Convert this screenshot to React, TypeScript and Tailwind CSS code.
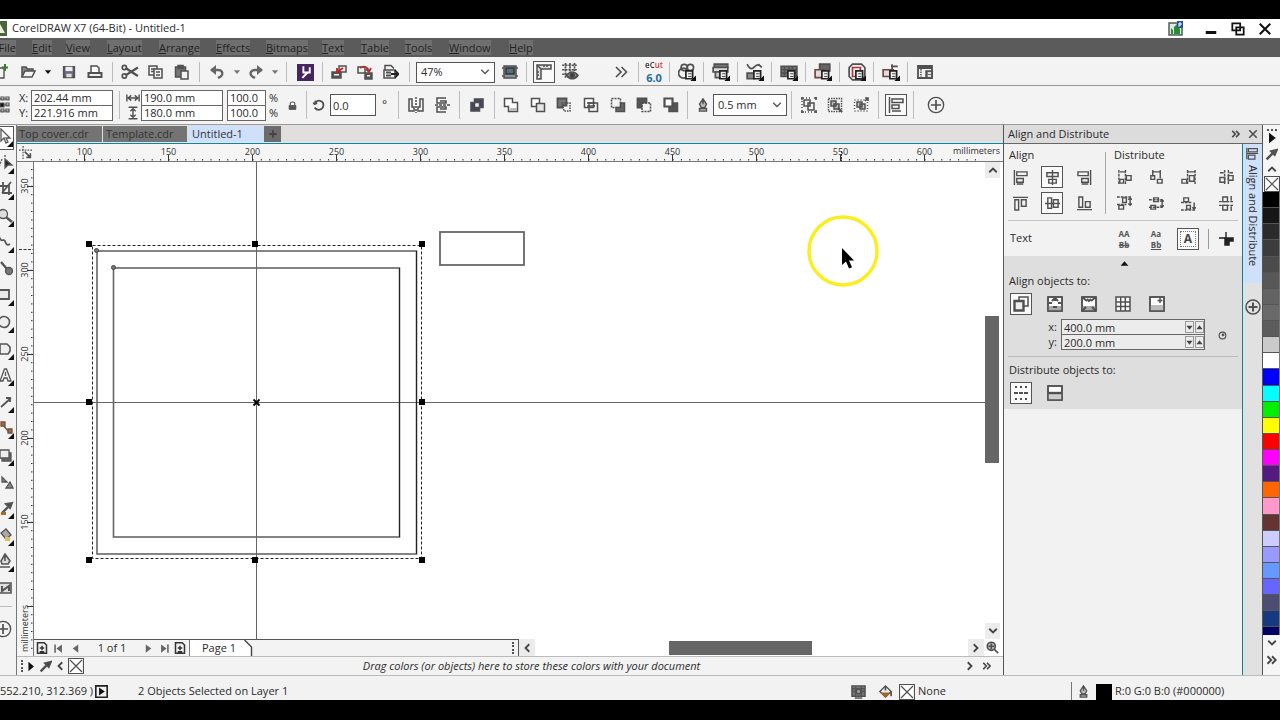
import React from "react";

type Kids = { children?: React.ReactNode };

function Ico({ children, size = 16 }: Kids & { size?: number }) {
  return (
    <svg width={size} height={size} viewBox="0 0 16 16" fill="none" stroke="#505050" strokeWidth="1.5" className="shrink-0" aria-hidden="true">
      {children}
    </svg>
  );
}

function Btn({ label, w = "w-[26px]", on = false, children }: Kids & { label: string; w?: string; on?: boolean }) {
  return (
    <button type="button" aria-label={label} aria-pressed={on || undefined} className={`flex h-6 shrink-0 items-center justify-center ${w}`}>
      {on ? <span className="flex size-[22px] items-center justify-center border border-[#555] bg-[#fafafa]">{children}</span> : children}
    </button>
  );
}

function Sep({ w = "w-2", h = "h-5" }: { w?: string; h?: string }) {
  return (
    <div className={`flex shrink-0 justify-center ${w}`}>
      <div className={`w-px bg-[#bdbdbd] ${h}`} />
    </div>
  );
}

function Caret({ dark = false }: { dark?: boolean }) {
  return (
    <Ico size={10}>
      <path d="M3 5h10l-5 6z" fill={dark ? "#111" : "#777"} stroke="none" />
    </Ico>
  );
}

function Chevron({ d, size = 12 }: { d: string; size?: number }) {
  return (
    <Ico size={size}>
      <path d={d} strokeWidth="2.4" stroke="#444" />
    </Ico>
  );
}

const RIGHT = "M5 3l5 5-5 5";
const LEFT = "M11 3l-5 5 5 5";
const UP = "M3 11l5-5 5 5";
const DOWN = "M3 5l5 5 5-5";
const DOUBLE = "M2 3l5 5-5 5M8 3l5 5-5 5";

const menus = [
  { t: "Edit", w: "w-[34px]" },
  { t: "View", w: "w-[41px]" },
  { t: "Layout", w: "w-[52px]" },
  { t: "Arrange", w: "w-[57px]" },
  { t: "Effects", w: "w-[50px]" },
  { t: "Bitmaps", w: "w-[56px]" },
  { t: "Text", w: "w-[39px]" },
  { t: "Table", w: "w-[44px]" },
  { t: "Tools", w: "w-[44px]" },
  { t: "Window", w: "w-[60px]" },
  { t: "Help", w: "w-[40px]" },
];

function TitleBar() {
  return (
    <header className="flex h-[19px] items-center bg-white">
      <svg width="7" height="15" viewBox="0 0 7 15" aria-hidden="true">
        <path d="M0 0h7v15H0z" fill="#49663f" />
        <path d="M0 3l5 9H0z" fill="#e8f0e0" />
      </svg>
      <h1 className="ml-[5px] flex-1 text-[11px]">CorelDRAW X7 (64-Bit) - Untitled-1</h1>
      <svg width="16" height="15" viewBox="0 0 16 15" className="mr-5" aria-hidden="true">
        <path d="M1 2h13v12H1z" fill="#dfe9df" stroke="#4d5f55" strokeWidth="1.5" />
        <path d="M3 13V7l2 2v4zM6 13V6l3-3 3 5v5z" fill="#2a8a35" />
        <path d="M9 0h6v7H9z" fill="#24518f" />
        <path d="M11 6V2h2v2h-2" stroke="#fff" fill="none" />
      </svg>
      <button type="button" aria-label="Minimize" className="w-[27px]">
        <Ico size={14}><path d="M2 12h12" strokeWidth="3.4" stroke="#111" /></Ico>
      </button>
      <button type="button" aria-label="Restore" className="w-[27px]">
        <Ico size={14}><path d="M1.500 1.500h9v8h-9zM6 6h8.500v8.500H6z" strokeWidth="2" stroke="#111" fill="#fff" /></Ico>
      </button>
      <button type="button" aria-label="Close" className="w-[22px]">
        <Ico size={14}><path d="M2 2l12 12M14 2L2 14" strokeWidth="2.4" stroke="#111" /></Ico>
      </button>
    </header>
  );
}

function MenuBar() {
  return (
    <nav className="flex h-[19px] items-center bg-[#5b5b5b] text-[11px] leading-[15px] text-[#222]">
      <button type="button" className="flex w-8 shrink-0 justify-end overflow-hidden pr-4">
        <span className="bg-[#6f6f6f]">File</span>
      </button>
      {menus.map((m) => (
        <button key={m.t} type="button" className={`shrink-0 text-left ${m.w}`}>
          <span className="bg-[#6f6f6f]"><u>{m.t[0]}</u>{m.t.slice(1)}</span>
        </button>
      ))}
    </nav>
  );
}

const flyouts: { label: string; art: React.ReactNode }[] = [
  { label: "Curve tools", art: <><circle cx="5" cy="9" r="4.500" /><circle cx="5.500" cy="4" r="2.800" /><circle cx="11" cy="4" r="2.800" /></> },
  { label: "Layer tools", art: <><path d="M2 1h12v3H2z" fill="#777" /><path d="M1 4h13v4H1z" fill="#ddd" /><path d="M3 8h6v5H3z" fill="#ccc" /></> },
  { label: "Path tools", art: <><path d="M1 1c3 6 5 4 7 2s4-2 6 1M11 1l3 3" /><path d="M1 14V9h6v5z" fill="#888" /></> },
  { label: "Grid tools", art: <path d="M1 3h14v9H1zM1 6h14M1 9h14M4 3v9M8 3v9M11 3v9" fill="#777" /> },
  { label: "Shape tools", art: <><path d="M5 1h9v6H5z" fill="#666" /><path d="M1 6h8v7H1z" fill="#ddd" stroke="#744" /></> },
  { label: "Contour tools", art: <><path d="M4 1h8l3 3v8l-3 3H4l-3-3V4z" /><path d="M4 4h7v8H4z" stroke="#b33" /></> },
  { label: "Connector tools", art: <><path d="M8 3h6M9 1v5" /><path d="M1 6h9v6H1z" fill="#ddd" stroke="#744" /></> },
];

function StandardBar() {
  return (
    <div role="toolbar" aria-label="Standard" className="flex h-[29px] items-center border-b border-[#9a9a9a] bg-[#f3f3f3] pt-[2px]">
      <button type="button" aria-label="New" className="flex h-6 w-[15px] shrink-0 justify-end overflow-hidden pr-[7px]">
        <svg width="8" height="24" viewBox="0 0 8 24" fill="none" stroke="#505050" strokeWidth="1.4">
          <path d="M0 8h4v10H0" />
          <path d="M5 4v7M2 7.500h6" stroke="#3b7a35" strokeWidth="2" />
        </svg>
      </button>
      <Btn label="Open">
        <Ico><path d="M2 13V3h4l1.500 2H13v2" fill="#888" /><path d="M2 13l3-6h10l-3 6z" fill="#f3f3f3" /></Ico>
      </Btn>
      <Btn label="Open recent" w="w-[14px]"><Caret dark /></Btn>
      <Btn label="Save" w="w-[27px]">
        <Ico size={14}><path d="M2 2h12v12H2z" fill="#6a6a80" strokeWidth="2" /><path d="M4 2h8v5H4z" fill="#eee" stroke="none" /><path d="M5 10h6v4H5z" fill="#ddd" stroke="none" /></Ico>
      </Btn>
      <Btn label="Print">
        <Ico><path d="M4 8V2h6l2 2v4" fill="#fff" /><path d="M1.500 9h13v4h-13z" fill="#eee" strokeWidth="2" /></Ico>
      </Btn>
      <Sep w="w-[9px]" />
      <Btn label="Cut">
        <Ico size={18}><path d="M4 4.500l11 7M4 11l11-7" strokeWidth="2" /><circle cx="3" cy="4" r="1.900" /><circle cx="3" cy="11.500" r="1.900" /></Ico>
      </Btn>
      <Btn label="Copy">
        <Ico><path d="M1 2h8v9H1zM3 5h4M3 7.500h4" /><path d="M6 5h8v9H6z" fill="#f3f3f3" /><path d="M8 8h4M8 11h4" /></Ico>
      </Btn>
      <Btn label="Paste">
        <Ico><path d="M1.500 3h10v10h-10z" fill="#777" /><path d="M4 1.500h5v3H4z" fill="#555" /><path d="M7 7h7v8H7z" fill="#f3f3f3" /></Ico>
      </Btn>
      <Sep w="w-[9px]" />
      <Btn label="Undo">
        <Ico><path d="M2 6h7c4 0 5 3 4 5s-2 2-4 3" strokeWidth="2.400" stroke="#666" /><path d="M7 1v10L1 6z" fill="#666" stroke="none" /></Ico>
      </Btn>
      <Btn label="Undo list" w="w-[13px]"><Caret /></Btn>
      <Btn label="Redo">
        <Ico><path d="M14 6H7c-4 0-5 3-4 5s2 2 4 3" strokeWidth="2.400" stroke="#666" /><path d="M9 1v10l6-5z" fill="#666" stroke="none" /></Ico>
      </Btn>
      <Btn label="Redo list" w="w-3"><Caret /></Btn>
      <Sep w="w-[11px]" />
      <Btn label="Content exchange">
        <Ico size={17}><path d="M0 0h16v16H0z" fill="#44265f" stroke="none" /><path d="M6 2v6h6V3M5 13l5-5" stroke="#fff" strokeWidth="1.800" /></Ico>
      </Btn>
      <Sep />
      <Btn label="Import">
        <Ico><path d="M1 8h9v6H1z" fill="#555" /><path d="M3 10h5v1.500H3z" fill="#eee" stroke="none" /><path d="M8 2h7v6H8z" fill="#eee" /><path d="M12 4L6 8M6 4v4h4" stroke="#b22" strokeWidth="1.800" /></Ico>
      </Btn>
      <Btn label="Export">
        <Ico><path d="M1 3h7v6H1z" fill="#eee" /><path d="M8 9h7v6H8z" fill="#555" /><path d="M10 11h3v1.500h-3z" fill="#eee" stroke="none" /><path d="M3 4c4-3 8-1 9 4M9 5l3 3 2-4" stroke="#a33" strokeWidth="1.800" /></Ico>
      </Btn>
      <Btn label="Publish">
        <Ico><path d="M2 6V1.500h6l3 3M1 6h11v8H1z" /><path d="M3 8.500h5M3 11.500h5" strokeWidth="2" /><path d="M8 10h7M12 6.500l3.500 3.500-3.500 3.500" strokeWidth="1.800" stroke="#222" /></Ico>
      </Btn>
      <Sep w="w-[11px]" />
      <select aria-label="Zoom level" defaultValue="47%" className="ml-px h-[21px] w-[79px] shrink-0 appearance-none border border-[#555] bg-white pl-1 text-[11px]">
        <option>47%</option>
      </select>
      <svg width="12" height="12" viewBox="0 0 16 16" className="pointer-events-none relative -ml-4 shrink-0" fill="none" stroke="#555" strokeWidth="1.800" aria-hidden="true">
        <path d={DOWN} />
      </svg>
      <Btn label="Full-screen preview" w="ml-[7px] w-[23px]">
        <Ico><path d="M2 2h12v12H2z" fill="#899" /><path d="M4 4h8v6H4z" fill="#57707c" stroke="#333" /><path d="M0 4h2M0 12h2M14 4h2M14 12h2" /></Ico>
      </Btn>
      <Sep w="w-[11px]" />
      <Btn label="Show rulers" w="w-6" on>
        <Ico><path d="M1 1h14v4H5v10H1z" fill="#ddd" /><path d="M8 1v2M11 1v2M1 8h2M1 11h2M5 5L1 1" /></Ico>
      </Btn>
      <Btn label="Show grid" w="w-7">
        <Ico size={18}><path d="M1 2h13M1 6h13M1 10h6M4 0v13M8 0v9M12 0v7" strokeDasharray="2 0.800" /><path d="M5 11c3-4 7-4 10 0-3 4-7 4-10 0z" fill="#999" /><circle cx="10" cy="11" r="1.800" fill="#333" /></Ico>
      </Btn>
      <Btn label="More" w="ml-6 w-[26px]">
        <Ico><path d="M3 3l5 5-5 5M8.500 3l5 5-5 5" strokeWidth="1.600" /></Ico>
      </Btn>
      <Sep w="w-[9px]" />
      <button type="button" className="w-[22px] shrink-0">
        <span className="block bg-linear-to-r from-[#333] from-50% to-[#c33] to-50% bg-clip-text text-[8px] font-semibold leading-[11px] text-transparent">eCut</span>
        <span className="block text-[11px] font-bold leading-[15px] text-[#1f6ca0]">6.0</span>
      </button>
      {flyouts.map((f) => (
        <React.Fragment key={f.label}>
          <Sep w="w-[9px]" />
          <Btn label={f.label} w="w-[25px]">
            <Ico size={18}>
              {f.art}
              <path d="M7 7h6v7H7z" fill="#eee" stroke="#222" />
              <path d="M9 9.500h3M9 12h3" strokeWidth="1" />
              <path d="M16 11v5h-5z" fill="#111" stroke="none" />
            </Ico>
          </Btn>
        </React.Fragment>
      ))}
      <Sep w="w-[9px]" />
      <Btn label="Docker window" w="w-[25px]">
        <Ico><path d="M1 2h14v12H1zM1 4h14" strokeWidth="1.800" /><path d="M9 7h6v7H9z" fill="#777" /><path d="M11 9h3M11 12h3" stroke="#fff" /><path d="M4 5v9" strokeDasharray="1.500 1" /></Ico>
      </Btn>
    </div>
  );
}

function Pair({ names, values, w }: { names: [string, string]; values: [string, string]; w: string }) {
  return (
    <div className={`flex h-[31px] shrink-0 flex-col border border-[#666] bg-white ${w}`}>
      <input aria-label={names[0]} defaultValue={values[0]} className="min-h-0 w-full flex-1 border-b border-[#666] pl-[2px] text-[11px] leading-[13px] outline-none" />
      <input aria-label={names[1]} defaultValue={values[1]} className="min-h-0 w-full flex-1 pl-[2px] text-[11px] leading-[13px] outline-none" />
    </div>
  );
}

const shaping: { label: string; art: React.ReactNode }[] = [
  { label: "Weld", art: <><path d="M1.500 1.500h8v4h5v9h-9v-5h-4z" fill="#fff" /><path d="M7 11h7v3H7z" fill="#bbb" stroke="none" /></> },
  { label: "Trim", art: <><path d="M1.500 1.500h8v8h-8z" fill="#fff" /><path d="M6.500 6.500h8v8h-8z" fill="#e6e6e6" /></> },
  { label: "Intersect", art: <><path d="M1.500 1.500h9v7h-4v2h-5z" fill="#777" strokeWidth="1.800" /><path d="M6 6h8v8H8z" strokeDasharray="1.500 1" /></> },
  { label: "Simplify", art: <><path d="M1.500 1.500h9v9h-9z" fill="#fff" /><path d="M6 6h8.500v8.500H6z" /><path d="M4 6h8M4 9h8" /></> },
  { label: "Front minus back", art: <><path d="M1.500 1.500h9v9h-9z" strokeDasharray="2 1" /><path d="M10.500 6h4v8.500H6v-4h4.500z" fill="#666" /></> },
  { label: "Back minus front", art: <><path d="M1.500 1.500h9v4h-5v5h-4z" fill="#555" strokeWidth="1.800" /><path d="M6 6h8.500v8.500H6z" strokeDasharray="2 1" /></> },
  { label: "Boundary", art: <><path d="M1.500 1.500h8v8h-8z" fill="#fff" strokeWidth="2.200" /><path d="M10.500 6h4v8.500H6v-4h4.500z" fill="#555" /></> },
];

function PropertyBar() {
  return (
    <div role="toolbar" aria-label="Property bar" className="flex h-[39px] items-center border-b border-[#9a9a9a] bg-[#f3f3f3]">
      <svg width="11" height="18" viewBox="0 0 11 18" fill="none" stroke="#555" strokeWidth="1.200" className="shrink-0" aria-hidden="true">
        <path d="M0 3h9M0 9h9M0 15h9" />
        <path d="M1 1h3v3H1zM6 1h3v3H6zM6 7h3v3H6zM1 13h3v3H1zM6 13h3v3H6z" />
        <path d="M0 7h4v4H0z" fill="#111" />
      </svg>
      <div className="ml-2 w-3 shrink-0 text-[11px] leading-[15px]">
        <div>X:</div>
        <div>Y:</div>
      </div>
      <Pair names={["X position", "Y position"]} values={["202.44 mm", "221.916 mm"]} w="w-[82px]" />
      <Sep w="w-[12px]" h="h-7" />
      <div className="flex w-4 shrink-0 flex-col items-center gap-px">
        <Ico size={14}><path d="M1 4v8M15 4v8M2 8h12M6 5L2.500 8 6 11M10 5l3.500 3-3.500 3" strokeWidth="1.600" /></Ico>
        <Ico size={14}><path d="M3 1.500h10M3 14.500h10M8 3v10M5 6l3-3 3 3M5 10l3 3 3-3" strokeWidth="1.600" /></Ico>
      </div>
      <Pair names={["Width", "Height"]} values={["190.0 mm", "180.0 mm"]} w="w-[82px]" />
      <div className="w-1 shrink-0" />
      <Pair names={["Horizontal scale", "Vertical scale"]} values={["100.0", "100.0"]} w="w-[39px]" />
      <div className="ml-[3px] w-[15px] shrink-0 text-[11px] leading-[15px]">
        <div>%</div>
        <div>%</div>
      </div>
      <Btn label="Lock ratio" w="w-4">
        <Ico size={9}><path d="M4 8V4c0-3 8-3 8 0v4" strokeWidth="2" /><path d="M2 8h12v7H2z" fill="#555" /></Ico>
      </Btn>
      <Sep w="w-[12px]" h="h-7" />
      <label htmlFor="angle" aria-label="Angle of rotation" className="w-[18px] shrink-0">
        <Ico size={14}><path d="M4 5c4-4 10-1 9 4-1 5-7 6-10 2M1 6h5M4 3L3 8" strokeWidth="2" /></Ico>
      </label>
      <input id="angle" defaultValue="0.0" className="h-[22px] w-[46px] shrink-0 border border-[#555] bg-white pl-[2px] text-[11px] outline-none" />
      <span className="ml-[6px] w-3 shrink-0 text-[12px]">°</span>
      <Sep w="w-[9px]" h="h-7" />
      <Btn label="Mirror horizontally">
        <Ico><path d="M1 2h3v8h2v4H1zM15 2h-3v8h-2v4h5z" /><path d="M8 0v16" strokeDasharray="2 1" /></Ico>
      </Btn>
      <Btn label="Mirror vertically">
        <Ico><path d="M12 1H3v5h9V4H6M12 15H3v-5h9v2H6" /><path d="M1 8h15" strokeDasharray="3 1" /></Ico>
      </Btn>
      <Sep w="w-[9px]" h="h-7" />
      <Btn label="Combine">
        <Ico size={14}><path d="M5 1h10v10H5z" fill="#46465a" /><path d="M1 5h10v10H1z" fill="#46465a" /><path d="M6 6h4v4H6z" fill="#eee" stroke="none" /></Ico>
      </Btn>
      <Sep w="w-[9px]" h="h-7" />
      <div className="flex w-[184px] shrink-0 justify-between">
        {shaping.map((s) => (
          <Btn key={s.label} label={s.label} w="w-6"><Ico>{s.art}</Ico></Btn>
        ))}
      </div>
      <Sep w="w-[9px]" h="h-7" />
      <label htmlFor="outline" aria-label="Outline width" className="ml-1 w-[17px] shrink-0">
        <Ico size={14}><path d="M8 1l4 6-2 4H6L4 7zM8 2v5M4 12h8v3H4z" fill="#bbb" strokeWidth="1.600" /></Ico>
      </label>
      <select id="outline" defaultValue="0.5 mm" className="h-[22px] w-[74px] shrink-0 appearance-none border border-[#555] bg-white pl-1 text-[11px]">
        <option>0.5 mm</option>
      </select>
      <svg width="12" height="12" viewBox="0 0 16 16" className="pointer-events-none relative -ml-4 shrink-0" fill="none" stroke="#555" strokeWidth="1.800" aria-hidden="true">
        <path d={DOWN} />
      </svg>
      <Sep w="ml-1 w-[9px]" h="h-7" />
      <Btn label="Group objects">
        <Ico><path d="M3 3h6v6H3zM7 6h6v7H7z" /><path d="M0 1h3M1 0v3M13 1h3M15 0v3M0 15h3M1 13v3M13 15h3M15 13v3" /><path d="M1 4v8M4 15h8M5 1h6" strokeDasharray="1 2" /></Ico>
      </Btn>
      <Btn label="Ungroup objects">
        <Ico><path d="M1.500 1.500h13v13h-13z" strokeDasharray="1.500 1" /><path d="M4 4h5v5H4zM7 7h5v5H7z" fill="#bbb" /><path d="M11 11l4 4" strokeWidth="2" /></Ico>
      </Btn>
      <Btn label="Ungroup all">
        <Ico><path d="M1.500 3h13v11h-13z" strokeDasharray="1 2" /><path d="M4 5h5v5H4zM7 7h5v5H7z" fill="#ccc" /><path d="M12 4l3-3M12 1h3v3" /></Ico>
      </Btn>
      <Sep w="w-[9px]" h="h-7" />
      <Btn label="Align and distribute" on>
        <Ico><path d="M1.500 0v16M4 2h11v3.500H4zM4 8h7v3.500H4z" /><path d="M4 14h9" /></Ico>
      </Btn>
      <Sep w="w-[9px]" h="h-7" />
      <Btn label="Quick customize" w="ml-[5px] w-[26px]">
        <Ico size={18}><circle cx="8" cy="8" r="6.800" strokeWidth="1.200" /><path d="M8 3.500v9M3.500 8h9" /></Ico>
      </Btn>
    </div>
  );
}

const tools: { label: string; art: React.ReactNode; fly?: boolean }[] = [
  { label: "Pick", art: <path d="M5 1v12l3-3 2 5 2-1-2-4h4z" fill="#fff" />, fly: true },
  { label: "Shape", art: <><path d="M8 0v3M5 4l-3 8" strokeDasharray="2 1" /><path d="M8 4v9l3-3h4z" fill="#222" /></>, fly: true },
  { label: "Crop", art: <path d="M6 1v11h9M3 5h9v9M14 1L5 12" strokeWidth="1.800" />, fly: true },
  { label: "Zoom", art: <><circle cx="6" cy="6" r="4.500" fill="#ddd" /><path d="M9 9l6 5" strokeWidth="2.400" /></>, fly: true },
  { label: "Freehand", art: <path d="M2 2c2 8 5 2 6 5s2 5 5 3" strokeWidth="1.800" />, fly: true },
  { label: "Artistic media", art: <><path d="M4 1l6 7" strokeWidth="2.400" /><circle cx="12" cy="10" r="3.500" fill="#777" /></> },
  { label: "Rectangle", art: <path d="M1 3h11v9H1z" fill="#e8e8e8" strokeWidth="1.800" />, fly: true },
  { label: "Ellipse", art: <circle cx="7" cy="8" r="5.500" fill="#eee" strokeWidth="1.600" />, fly: true },
  { label: "Polygon", art: <path d="M3 3h7l3 3v4l-2 3H3z" fill="#eee" strokeWidth="1.600" />, fly: true },
  { label: "Text", art: <path d="M3 14L7.500 2h2L14 14h-3l-1-3H7l-1 3zM8.500 5v4" />, fly: true },
  { label: "Dimension", art: <path d="M4 13l10-9M9 4h4v4" strokeWidth="1.800" />, fly: true },
  { label: "Connector", art: <><path d="M5 4l7 8" /><path d="M4 2h4v4H4zM11 9h4v4h-4z" fill="#a86a4a" stroke="#74503c" /></>, fly: true },
  { label: "Drop shadow", art: <><path d="M5 6h9v8H5z" fill="#666" /><path d="M3 3h9v8H3z" fill="#eee" /></>, fly: true },
  { label: "Transparency", art: <path d="M5 8V3l5 5zM9 14l4-6 3 6z" fill="#888" /> },
  { label: "Eyedropper", art: <><path d="M5 13l6-6" strokeWidth="2.400" /><path d="M9 4l4 4 2-5z" fill="#444" strokeWidth="2" /><path d="M4 12h5v3H4z" fill="#a86a30" stroke="none" /></>, fly: true },
  { label: "Interactive fill", art: <><path d="M4 6l5-4 5 6-5 4z" fill="#aaa" /><path d="M8 10h5v4H8z" fill="#e0c060" stroke="none" /></>, fly: true },
  { label: "Outline pen", art: <path d="M8 1l5 7-2 3H5L4 8zM8 2v6M3 14h10" fill="#ddd" strokeWidth="1.600" />, fly: true },
  { label: "Smart fill", art: <><path d="M2 3h12v10H2z" fill="#ddd" strokeWidth="1.600" /><path d="M5 6v5l7-5v5" strokeWidth="2" /></> },
];

function Toolbox() {
  return (
    <aside className="flex w-[17px] shrink-0 flex-col border-r border-[#777] bg-[#f3f3f3] pt-px text-[#333]">
      <div className="flex h-[476px] flex-col justify-between">
        {tools.map((t, i) => (
          <button key={t.label} type="button" aria-label={t.label} className={`flex h-6 w-[14px] items-center justify-end overflow-hidden ${i === 0 ? "border border-l-0 border-[#555] bg-white" : ""}`}>
            <svg width="17" height="20" viewBox="0 0 17 20" fill="none" stroke="#555" strokeWidth="1.300" className="shrink-0">
              {t.art}
              {t.fly && <path d="M17 13v6h-6z" fill="#111" stroke="none" />}
            </svg>
          </button>
        ))}
      </div>
      <div className="mt-1 h-px w-3 bg-[#bbb]" />
      <button type="button" aria-label="Customize toolbox" className="mt-[10px] flex h-6 w-3 items-center justify-end overflow-hidden">
        <Ico size={18}><circle cx="8" cy="8" r="6.800" strokeWidth="1.200" /><path d="M8 3.500v9M3.500 8h9" /></Ico>
      </button>
    </aside>
  );
}

const range = (n: number) => Array.from({ length: n }, (_, i) => i);

function TopRuler() {
  return (
    <div className="flex h-[18px] shrink-0 border-b border-[#777] bg-[#f5f5f5]">
      <div className="flex w-[17px] shrink-0 items-center justify-center">
        <Ico size={13}><path d="M5 0v16M0 5h16" strokeDasharray="2 1.500" /><path d="M7 7l7 7M14 9v5H9" strokeWidth="2" /></Ico>
      </div>
      <div className="min-w-0 flex-1">
        <svg width="100%" height="17" className="block" fill="#333" fontSize="9">
          {range(112).map((i) => (
            <rect key={i} x={8.500 + i * 8.400} y="15" width="1" height="1.500" />
          ))}
          {range(11).map((i) => (
            <g key={i}>
              <rect x={50 + i * 84} y="11" width="1" height="6" />
              <text x={50.500 + i * 84} y="11" textAnchor="middle">{100 + i * 50}</text>
            </g>
          ))}
          <path d="M807.500 7v10" stroke="#333" strokeDasharray="2 1" />
          <text x="919" y="10">millimeters</text>
        </svg>
      </div>
    </div>
  );
}

function LeftRuler() {
  return (
    <div className="w-[17px] shrink-0 border-r border-[#777] bg-[#f5f5f5]">
      <svg width="16" height="100%" className="block" fill="#333" fontSize="9">
        {range(58).map((i) => (
          <rect key={i} x="14" y={7 + i * 8.400} width="1.500" height="1" />
        ))}
        {range(6).map((i) => (
          <g key={i}>
            <rect x="10" y={24 + i * 84} width="6" height="1" />
            {i < 5 && (
              <text transform={`translate(11 ${24 + i * 84}) rotate(-90)`} textAnchor="middle">{350 - i * 50}</text>
            )}
          </g>
        ))}
        <path d="M2 87.500h14" stroke="#333" strokeDasharray="3 1.500" />
        <text transform="translate(11 490) rotate(-90)">millimeters</text>
      </svg>
    </div>
  );
}

const handles = [
  [52, 79], [218, 79], [385, 79],
  [52, 237], [385, 237],
  [52, 395], [218, 395], [385, 395],
];

function Canvas() {
  return (
    <div className="min-w-0 flex-1 bg-white">
      <svg width="100%" height="100%" className="block" fill="none" aria-label="Drawing page">
        <path d="M222.500 0v800M0 240.500h2000" stroke="#666" />
        <rect x="58.500" y="83.500" width="329" height="313" stroke="#222" strokeDasharray="3 2" />
        <rect x="63" y="89" width="319.500" height="303" stroke="#666" strokeWidth="1.600" />
        <rect x="79.500" y="106" width="286" height="269" stroke="#666" strokeWidth="1.600" />
        <path d="M365.500 106v269M382.500 89v303" stroke="#222" />
        <rect x="406" y="70" width="84" height="33" stroke="#666" strokeWidth="1.800" />
        <circle cx="62.500" cy="88.500" r="2" fill="#777" stroke="#444" />
        <circle cx="79.500" cy="105.500" r="2" fill="#777" stroke="#444" />
        {handles.map(([x, y]) => (
          <rect key={`${x}-${y}`} x={x} y={y} width="6" height="6" fill="#000" />
        ))}
        <path d="M219.500 237.500l6 6M225.500 237.500l-6 6" stroke="#000" strokeWidth="1.800" />
        <circle cx="809" cy="89" r="34" stroke="#fbee1c" strokeWidth="3.400" />
        <path d="M808 86v17l4-3.500 3 7 3-1.300-3-6.700h5z" fill="#000" />
      </svg>
    </div>
  );
}

function DocTabs() {
  return (
    <div className="flex h-[17px] shrink-0 items-stretch gap-px bg-[#e1dfde] pt-px text-[11px] leading-4">
      <button type="button" className="w-[85px] bg-[#747474] pl-[2px] text-left text-[#333]">Top cover.cdr</button>
      <button type="button" className="w-[84px] bg-[#747474] pl-[3px] text-left text-[#333]">Template.cdr</button>
      <button type="button" className="w-[75px] bg-[#cfe0fb] pl-1 text-left text-[#333]">Untitled-1</button>
      <button type="button" aria-label="New document" className="flex w-[17px] items-center justify-center bg-[#6c6c6c]">
        <Ico size={10}><path d="M8 2v12M2 8h12" strokeWidth="3" stroke="#444" /></Ico>
      </button>
    </div>
  );
}

function PageNav() {
  return (
    <div className="flex h-[17px] shrink-0 items-center bg-white">
      <div className="flex h-full w-[485px] shrink-0 items-center border-r border-t border-[#555] bg-[#f3f3f3] text-[11px]">
        <Btn label="Add page before" w="w-4"><Ico size={12}><path d="M2 1h9l3 3v11H2zM5 8h6M8 5v6M5 13h6" strokeWidth="2" stroke="#333" /></Ico></Btn>
        <Btn label="First page" w="w-4"><Ico size={11}><path d="M3 2v12" strokeWidth="2" /><path d="M13 2v12L5 8z" fill="#666" stroke="none" /></Ico></Btn>
        <Btn label="Previous page" w="w-[18px]"><Ico size={11}><path d="M12 2v12L4 8z" fill="#666" stroke="none" /></Ico></Btn>
        <span className="w-[56px] text-center">1 of 1</span>
        <Btn label="Next page" w="w-4"><Ico size={11}><path d="M4 2v12l8-6z" fill="#666" stroke="none" /></Ico></Btn>
        <Btn label="Last page" w="w-4"><Ico size={11}><path d="M13 2v12" strokeWidth="2" /><path d="M3 2v12l8-6z" fill="#666" stroke="none" /></Ico></Btn>
        <Btn label="Add page after" w="w-4"><Ico size={12}><path d="M2 1h9l3 3v11H2zM5 8h6M8 5v6M5 13h6" strokeWidth="2" stroke="#333" /></Ico></Btn>
        <button type="button" className="ml-px flex h-full items-center border-l border-[#777] bg-white pl-3">
          Page 1
          <svg width="16" height="16" viewBox="0 0 16 16" className="ml-1" fill="none" aria-hidden="true">
            <path d="M5 0h11v16h-4V7z" fill="#f3f3f3" />
            <path d="M4.500 0l7 7v9" stroke="#444" strokeWidth="1.400" />
          </svg>
        </button>
        <span className="ml-auto mr-1 h-3 border-l-2 border-dotted border-[#555]" />
      </div>
      <button type="button" aria-label="Scroll left" className="flex h-full w-4 items-center justify-center bg-[#ececec]"><Chevron d={LEFT} /></button>
      <div className="flex h-full min-w-0 flex-1 items-center">
        <div className="w-[31%] shrink-0" />
        <div className="h-[14px] w-[33%] bg-[#666]" />
      </div>
      <button type="button" aria-label="Scroll right" className="flex h-full w-4 items-center justify-center bg-[#ececec]"><Chevron d={RIGHT} /></button>
      <button type="button" aria-label="Navigator" className="mr-[3px] flex h-full w-4 items-center justify-center">
        <Ico size={13}><circle cx="6.500" cy="6.500" r="5" fill="#bbb" strokeWidth="2" /><path d="M6.500 3v7M3 6.500h7M10 10l5 5" strokeWidth="2" /></Ico>
      </button>
    </div>
  );
}

function DocPalette() {
  return (
    <div className="flex h-[19px] shrink-0 items-center border-t border-[#bbb] bg-[#f3f3f3]">
      <span className="ml-1 h-3 border-l-2 border-dotted border-[#555]" />
      <Btn label="Palette menu" w="w-[15px]"><Ico size={11}><path d="M5 1v14l8-7z" fill="#111" stroke="none" /></Ico></Btn>
      <Btn label="Pick color" w="w-[15px]"><Ico size={13}><path d="M2 14l7-7" strokeWidth="3" /><path d="M7 4l5 5 3-7z" fill="#444" strokeWidth="2" /></Ico></Btn>
      <Btn label="Previous colors" w="w-[13px]"><Chevron d={LEFT} size={12} /></Btn>
      <Btn label="No color" w="w-5"><Ico><path d="M.5.500h15v15H.5zM2 2l12 12M14 2L2 14" strokeWidth="1.200" fill="#fff" /></Ico></Btn>
      <p className="flex-1 pl-[15px] text-center text-[11px] italic">Drag colors (or objects) here to store these colors with your document</p>
      <Btn label="Next colors" w="w-4"><Chevron d={RIGHT} /></Btn>
      <Btn label="Expand palette" w="mr-2 w-[17px]"><Chevron d={DOUBLE} size={10} /></Btn>
    </div>
  );
}

function VScroll() {
  return (
    <div className="flex w-[18px] shrink-0 flex-col bg-white pr-[3px]">
      <button type="button" aria-label="Scroll up" className="flex h-4 items-center justify-center bg-[#ececec]"><Chevron d={UP} /></button>
      <div className="flex min-h-0 flex-1 flex-col">
        <div className="h-[31%] shrink-0" />
        <div className="h-[33%] w-[14px] bg-[#666]" />
      </div>
      <button type="button" aria-label="Scroll down" className="flex h-4 items-center justify-center bg-[#ececec]"><Chevron d={DOWN} /></button>
    </div>
  );
}

const alignRows: { label: string; art: React.ReactNode; on?: boolean }[][] = [
  [
    { label: "Align left", art: <path d="M1.500 0v16M4 2h11v4H4zM4 9h7v4H4zM4 15h7" /> },
    { label: "Align center horizontally", on: true, art: <path d="M8 0v16M2 3h12v4H2zM4 10h8v4H4z" /> },
    { label: "Align right", art: <path d="M14.500 0v16M1 2h11v4H1zM5 9h7v4H5zM5 15h7" /> },
  ],
  [
    { label: "Align top", art: <path d="M0 1.500h16M2 4h4v11H2zM9 4h5v7H9z" /> },
    { label: "Align center vertically", on: true, art: <path d="M0 8h16M3 2h4v11H3zM9 4h5v8H9z" /> },
    { label: "Align bottom", art: <path d="M0 14.500h16M2 1h4v11H2zM9 6h5v6H9z" /> },
  ],
];

const distRows: { label: string; art: React.ReactNode }[][] = [
  [
    { label: "Distribute left", art: <><path d="M2 0v16M9 0v16" strokeDasharray="3 1" /><path d="M3 10h4v4H3zM10 6h5v5h-5zM3 2h6" /></> },
    { label: "Distribute center", art: <><path d="M4 0v7M12 0v9M4 2h8" /><path d="M2 6h4v4H2zM9 10h5v4H9z" /></> },
    { label: "Distribute right", art: <><path d="M7 0v16M15 0v16" strokeDasharray="3 1" /><path d="M1 10h5v4H1zM9 6h5v6H9zM7 2h8" /></> },
    { label: "Distribute spacing horizontally", art: <><path d="M6 0v16M10 0v16" strokeDasharray="3 1" /><path d="M1 8h5v5H1zM10 6h5v5h-5zM1 3h4M11 3h4" /></> },
  ],
  [
    { label: "Distribute top", art: <><path d="M0 1h16M0 9h10" strokeDasharray="3 1" /><path d="M6 2h4v5H6zM2 10h5v4H2zM14 2v8M12 4l2-2 2 2M12 8l2 2 2-2" /></> },
    { label: "Distribute middle", art: <><path d="M0 4h14M0 12h14" strokeDasharray="3 1" /><path d="M5 2h5v4H5zM2 10h5v4H2zM14 4v8M12 6l2-2 2 2M12 10l2 2 2-2" /></> },
    { label: "Distribute bottom", art: <><path d="M0 7h12M0 15h16" strokeDasharray="3 1" /><path d="M3 2h5v4H3zM6 10h4v4H6zM14 7v7M12 12l2 2 2-2" /></> },
    { label: "Distribute spacing vertically", art: <><path d="M0 6h16M0 10h16" strokeDasharray="3 1" /><path d="M4 1h5v5H4zM4 10h5v5H4zM13 0v5M13 11v5" /></> },
  ],
];

const targets: { label: string; art: React.ReactNode; on?: boolean }[] = [
  { label: "Active objects", on: true, art: <><path d="M6 1h9v9H6z" /><path d="M1.500 5h9v9.500h-9z" fill="#eee" strokeWidth="2.400" /></> },
  { label: "Page edge", art: <><path d="M1 1h14v14H1z" fill="#fff" /><path d="M1 10h14v5H1z" fill="#aaa" stroke="none" /><path d="M8 2v3M2 7h3M11 7h3M6 11h4M5 5l3-3 3 3" strokeWidth="2" /><path d="M1 1h14v14H1z" /></> },
  { label: "Page center", art: <><path d="M1 1h14v14H1z" fill="#fff" /><path d="M1 10h14v5H1z" fill="#aaa" stroke="none" /><path d="M1 1l5 4M15 1l-5 4M1 15l4-4M15 15l-4-4M6 3l2 2 2-2" strokeWidth="2" /><path d="M1 1h14v14H1z" /></> },
  { label: "Grid", art: <path d="M1 1h14v14H1zM1 6h14M1 10.500h14M5.700 1v14M10.300 1v14" fill="#fff" /> },
  { label: "Specified point", art: <><path d="M1 1h14v14H1z" fill="#fff" /><path d="M1 9h14v6H1z" fill="#bbb" stroke="none" /><path d="M11 2v5M8.500 4.500h5" /><path d="M1 1h14v14H1z" /></> },
];

function CoordField({ id, label, value }: { id: string; label: string; value: string }) {
  return (
    <div className="flex h-[15px] items-stretch text-[11px] leading-[14px]">
      <label htmlFor={id} className="w-[17px] pr-1 text-right">{label}</label>
      <div className="-mt-px flex min-w-0 flex-1 items-center border border-[#666] bg-[#ececec]">
        <input id={id} defaultValue={value} className="h-full min-w-0 flex-1 pl-[2px] outline-none" />
        <button type="button" aria-label={`Decrease ${label}`} className="flex h-3 w-[9px] items-center justify-center border border-[#999]">
          <Ico size={7}><path d="M1 4h14l-7 9z" fill="#444" stroke="none" /></Ico>
        </button>
        <button type="button" aria-label={`Increase ${label}`} className="ml-px flex h-3 w-[9px] items-center justify-center border border-[#999]">
          <Ico size={7}><path d="M1 12h14L8 3z" fill="#444" stroke="none" /></Ico>
        </button>
      </div>
    </div>
  );
}

function Docker() {
  return (
    <aside className="flex w-[259px] shrink-0 flex-col border-l border-[#555] bg-[#f2f2f2]">
      <div className="flex h-[19px] shrink-0 items-center border-b border-[#666] bg-[#dcdcdc]">
        <h2 className="flex-1 pl-1 text-[11px] font-medium">Align and Distribute</h2>
        <Btn label="Collapse docker" w="w-4"><Chevron d={DOUBLE} size={10} /></Btn>
        <Btn label="Close docker" w="w-[18px]"><Ico size={10}><path d="M2 2l12 12M14 2L2 14" strokeWidth="2.600" /></Ico></Btn>
      </div>
      <div className="flex min-h-0 flex-1">
        <div className="min-w-0 flex-1 text-[11px]">
          <div className="flex h-[76px]">
            <div className="w-[101px] shrink-0">
              <h3 className="h-5 pl-[5px] font-medium leading-[22px]">Align</h3>
              {alignRows.map((row, i) => (
                <div key={i} className="flex h-[26px] items-center">
                  {row.map((b) => (
                    <Btn key={b.label} label={b.label} w="w-8" on={b.on}><Ico size={15}>{b.art}</Ico></Btn>
                  ))}
                </div>
              ))}
            </div>
            <div className="mt-2 h-[62px] w-px bg-[#aaa]" />
            <div className="min-w-0 flex-1">
              <h3 className="h-5 pl-2 font-medium leading-[22px]">Distribute</h3>
              {distRows.map((row, i) => (
                <div key={i} className="flex h-[26px] items-center pl-[2px]">
                  {row.map((b, j) => (
                    <Btn key={b.label} label={b.label} w={j === 3 ? "ml-auto w-8" : "w-8"}><Ico size={15}>{b.art}</Ico></Btn>
                  ))}
                </div>
              ))}
            </div>
          </div>
          <div className="mx-1 border-t border-[#c4c4c4]" />
          <div className="flex h-[35px] items-center">
            <span className="w-[104px] pl-[6px]">Text</span>
            <Btn label="First line baseline" w="w-8">
              <span className="text-[8px] font-bold leading-[11px] text-[#555]"><span className="block">AA</span><span className="block line-through">Bb</span></span>
            </Btn>
            <Btn label="Last line baseline" w="w-8">
              <span className="text-[8px] font-bold leading-[11px] text-[#555]"><span className="block">Aa</span><span className="block underline">Bb</span></span>
            </Btn>
            <Btn label="Bounding box" w="w-8" on>
              <span className="border border-dotted border-[#777] px-[3px] text-[12px] font-bold leading-[14px] text-[#444]">A</span>
            </Btn>
            <div className="ml-1 h-5 w-px bg-[#999]" />
            <Btn label="Use outline" w="ml-auto w-8"><Ico><path d="M8 1v8M1 7h7" strokeWidth="1.800" /><path d="M7 7h8v3h-4v4H7z" fill="#222" stroke="#222" /></Ico></Btn>
          </div>
          <div className="bg-[#dedede] pb-1">
            <button type="button" aria-label="Collapse options" className="flex h-[14px] w-[240px] items-center justify-center">
              <Ico size={9}><path d="M1 12h14L8 4z" fill="#111" stroke="none" /></Ico>
            </button>
            <h3 className="h-[22px] pl-[5px] font-medium leading-[22px]">Align objects to:</h3>
            <div className="flex h-6 items-center">
              {targets.map((b) => (
                <Btn key={b.label} label={b.label} w="w-[34px]" on={b.on}><Ico>{b.art}</Ico></Btn>
              ))}
            </div>
            <div className="mt-1 flex items-center">
              <div className="ml-10 min-w-0 flex-1 pb-px">
                <CoordField id="px" label="x:" value="400.0 mm" />
                <CoordField id="py" label="y:" value="200.0 mm" />
              </div>
              <Btn label="Pick point" w="mr-[3px] w-[34px]">
                <Ico size={9}><circle cx="8" cy="8" r="6" strokeWidth="2" /><circle cx="9" cy="7" r="1.500" strokeWidth="2" /></Ico>
              </Btn>
            </div>
            <div className="mx-1 mt-[5px] border-t border-[#bbb]" />
            <h3 className="h-6 pl-[5px] font-medium leading-[26px]">Distribute objects to:</h3>
            <div className="flex h-6 items-center">
              <Btn label="Extent of selection" w="w-[34px]" on>
                <Ico><path d="M1 8h14" strokeWidth="2" strokeDasharray="4 1" /><path d="M2 2h13M2 14h13" strokeWidth="2" strokeDasharray="2 3" /></Ico>
              </Btn>
              <Btn label="Extent of page" w="w-[34px]">
                <Ico><path d="M1 1h14v14H1z" fill="#fff" /><path d="M1 9h14v6H1z" fill="#ccc" stroke="none" /><path d="M1 8h14" strokeWidth="2.400" /><path d="M1 1h14v14H1z" /></Ico>
              </Btn>
            </div>
          </div>
        </div>
        <div className="flex w-5 shrink-0 flex-col items-center border-l border-[#16808a] bg-[#e1e1e1]">
          <button type="button" className="flex h-[139px] w-full flex-col items-center bg-[#cfe0fb] pt-[3px] text-[11px]">
            <Ico size={13}><path d="M1 1v14M1 8h14M3 2h11v4H3zM3 10h8v5H3z" /></Ico>
            <span className="mt-[5px] leading-4 font-medium [writing-mode:vertical-rl]">Align and Distribute</span>
          </button>
          <button type="button" aria-label="Add docker" className="mt-4">
            <Ico><circle cx="8" cy="8" r="7" /><path d="M8 3.500v9M3.500 8h9" strokeWidth="2" /></Ico>
          </button>
        </div>
      </div>
    </aside>
  );
}

const swatches = [
  "bg-black", "bg-[#161616]", "bg-[#2b2b2b]", "bg-[#3c3c3c]", "bg-[#4b4b4b]", "bg-[#585858]", "bg-[#636363]", "bg-[#6a6a6a]", "bg-[#5c5c5c]",
  "bg-[#cacaca]", "bg-white", "bg-[#0000ff]", "bg-[#00ffff]", "bg-[#00f000]", "bg-[#ffff00]", "bg-[#ff0000]", "bg-[#ff00ff]",
  "bg-[#551a80]", "bg-[#ff6600]", "bg-[#ff99cc]", "bg-[#663333]", "bg-[#ccccff]", "bg-[#9999ff]", "bg-[#6699ff]", "bg-[#6666ff]", "bg-[#4d4d73]", "bg-[#163a80]",
];

function Palette() {
  return (
    <aside className="flex w-[18px] shrink-0 flex-col items-center border-l border-[#555] bg-[#f5f5f5]">
      <span className="mt-1 w-[10px] border-t-2 border-dotted border-[#555]" />
      <button type="button" aria-label="Palette options" className="mt-px h-3"><Ico size={12}><path d="M4 1v14l9-7z" fill="#111" stroke="none" /></Ico></button>
      <button type="button" aria-label="Sample color" className="mt-[3px] h-[14px]"><Ico size={13}><path d="M2 14l7-7" strokeWidth="3" /><path d="M7 4l5 5 3-7z" fill="#555" strokeWidth="2" /></Ico></button>
      <button type="button" aria-label="Scroll palette up" className="mt-px h-[14px]"><Chevron d={UP} /></button>
      <button type="button" aria-label="No fill" className="h-4"><Ico><path d="M.5.500h15v15H.5zM2 2l12 12M14 2L2 14" strokeWidth="1.200" fill="#fff" /></Ico></button>
      <div className="flex min-h-0 w-full flex-1 flex-col border-r border-[#777]">
        {swatches.map((c) => (
          <button key={c} type="button" aria-label="Color swatch" className={`w-full flex-[2] border-b border-[#555] ${c}`} />
        ))}
        <button type="button" aria-label="Color swatch" className="w-full flex-1 bg-[#000066]" />
      </div>
      <button type="button" aria-label="Scroll palette down" className="h-4"><Chevron d={DOWN} /></button>
      <button type="button" aria-label="Expand color palette" className="mb-[6px] h-[18px]"><Chevron d={DOUBLE} /></button>
    </aside>
  );
}

function StatusBar() {
  return (
    <footer className="flex h-[25px] shrink-0 items-center border-t border-[#bbb] bg-[#f2f2f2] pt-[7px] text-[11px]">
      <span className="w-[95px] shrink-0 whitespace-nowrap">552.210, 312.369 )</span>
      <button type="button" aria-label="Details"><Ico size={13}><path d="M1 1h14v14H1z" strokeWidth="2" stroke="#222" /><path d="M5 3v10l7-5z" fill="#111" stroke="none" /></Ico></button>
      <span className="ml-[30px] flex-1">2 Objects Selected on Layer 1</span>
      <Ico size={15}><path d="M1 2h14v11H1z" fill="#777" /><path d="M1 5h14M1 8h14M5 2v11M11 2v11" stroke="#555" /><circle cx="8" cy="8" r="2.500" fill="#999" /><path d="M4 15h8" /></Ico>
      <div className="w-3" />
      <Ico size={15}><path d="M2 8l6-6 6 6-6 6z" fill="#eee" /><path d="M2 9h12l-6 5z" fill="#a0672a" stroke="none" /><path d="M8 2v5M14 8v5" strokeWidth="1.800" /></Ico>
      <div className="w-[6px]" />
      <Ico><path d="M.5.500h15v15H.5zM2 2l12 12M14 2L2 14" strokeWidth="1.200" fill="#fff" /></Ico>
      <span className="ml-[3px] w-[153px]">None</span>
      <div className="h-5 w-px bg-[#777]" />
      <div className="w-[5px]" />
      <Ico size={13}><path d="M8 1l4 6-2 4H6L4 7zM8 2v5M4 12h8v3H4z" fill="#bbb" strokeWidth="1.600" /></Ico>
      <div className="ml-[6px] size-4 bg-black" />
      <span className="ml-[3px] w-[165px]">R:0 G:0 B:0 (#000000)</span>
    </footer>
  );
}

export default function App() {
  return (
    <div className="h-dvh bg-black py-5 font-['Open_Sans','Noto_Sans',sans-serif] text-[#2b2b2b]">
      <div className="-mt-px flex h-[calc(100%+1px)] flex-col overflow-hidden">
        <TitleBar />
        <MenuBar />
        <StandardBar />
        <PropertyBar />
        <main className="flex min-h-0 flex-1">
          <Toolbox />
          <section className="flex min-w-0 flex-1 flex-col">
            <DocTabs />
            <div className="h-[2px] shrink-0 border-b border-[#1d7f94] bg-[#cfeef0]" />
            <TopRuler />
            <div className="flex min-h-0 flex-1">
              <LeftRuler />
              <div className="flex min-w-0 flex-1 flex-col">
                <div className="flex min-h-0 flex-1">
                  <Canvas />
                  <VScroll />
                </div>
                <PageNav />
              </div>
            </div>
            <DocPalette />
          </section>
          <Docker />
          <Palette />
        </main>
        <StatusBar />
      </div>
    </div>
  );
}
